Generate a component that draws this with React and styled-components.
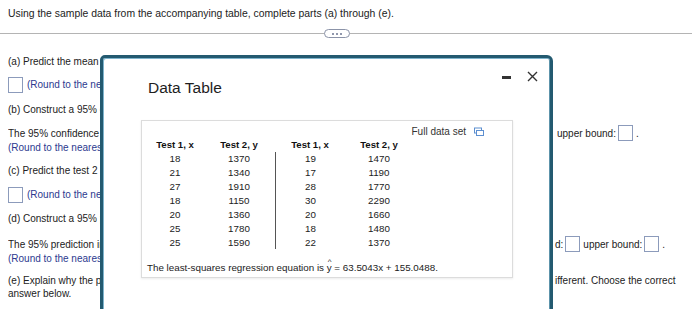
import React from "react"
import styled, { createGlobalStyle } from "styled-components"

const GlobalStyle = createGlobalStyle`
  html, body {
    margin: 0;
    padding: 0;
    background: #fff;
    font-family: "Liberation Sans", Arial, sans-serif;
    color: #222;
  }
`

const Page = styled.div`
  position: relative;
  width: 700px;
  height: 309px;
  overflow: hidden;
  font-size: 10px;
`

const Intro = styled.div`
  padding: 7px 8px 0;
  line-height: 13px;
  font-size: 10.4px;
`

const RuleRow = styled.div`
  position: relative;
  margin: 13px 8px 0 0;
  height: 1px;
  background: #b4b4b4;
`

const MorePill = styled.span`
  position: absolute;
  left: 324px;
  top: -4px;
  width: 24px;
  height: 7px;
  border: 1px solid #8b93a8;
  border-radius: 5px;
  background: #fff;
  display: flex;
  align-items: center;
  justify-content: center;
  gap: 2px;
`

const Dot = styled.i`
  width: 2px;
  height: 2px;
  border-radius: 50%;
  background: #6b7590;
`

const Parts = styled.div`
  padding: 20px 0 0 8px;
`

const Para = styled.div`
  margin-top: ${p => p.$gap ?? 10}px;
`

const Line = styled.div`
  display: flex;
  align-items: center;
  height: ${p => p.$h ?? 14}px;
  white-space: nowrap;
`

const Clip = styled.div`
  width: 547px;
  overflow: hidden;
  display: flex;
  align-items: center;
  flex-shrink: 0;
`

const Hint = styled.span`
  color: #2c3a8f;
`

const AnswerBox = styled.span`
  display: inline-block;
  width: 13px;
  height: 14px;
  border: 1px solid #8c9bbb;
  margin: 0 ${p => p.$mr ?? 4}px 0 ${p => p.$ml ?? 0}px;
  flex-shrink: 0;
`

const Right = styled.div`
  display: flex;
  align-items: center;
  padding-left: ${p => p.$pl ?? 0}px;
`

const Dialog = styled.div`
  position: absolute;
  left: 100px;
  top: 55px;
  width: 447px;
  height: 270px;
  background: #fff;
  border: 3px solid #235a70;
  border-radius: 5px 6px 0 0;
  box-shadow: inset 1px 1px 0 #7fb4cc, inset -1px 0 0 #5d94ab;
`

const DialogHead = styled.div`
  display: flex;
  align-items: center;
  justify-content: space-between;
  padding: 17px 12px 0 45px;
  height: 18px;
`

const Title = styled.h2`
  margin: 8px 0 0;
  font-size: 15.5px;
  font-weight: normal;
  color: #1e1e1e;
`

const Controls = styled.div`
  display: flex;
  align-items: center;
  gap: 16px;
  margin-top: -16px;
`

const Minimize = styled.span`
  width: 9px;
  height: 3px;
  background: #333;
  margin-top: 2px;
`

const CloseIcon = () => (
  <svg width="11" height="11" viewBox="0 0 11 11">
    <path d="M1 1 L10 10 M10 1 L1 10" stroke="#333" strokeWidth="1.4" />
  </svg>
)

const DataBox = styled.div`
  margin: 27px 37px 0 38px;
  height: 156px;
  border: 1px solid #dcdcdc;
  box-shadow: 0 1px 2px rgba(0, 0, 0, 0.08);
  display: flex;
  flex-direction: column;
`

const FullSet = styled.div`
  display: flex;
  justify-content: flex-end;
  align-items: center;
  gap: 8px;
  padding: 5px 28px 0 0;
  font-size: 10px;
  color: #333;
  height: 10px;
`

const SetIcon = () => (
  <svg width="10" height="9" viewBox="0 0 10 9">
    <rect x="0.5" y="1" width="7" height="5" fill="none" stroke="#5d8fd0" strokeWidth="1" />
    <rect x="2.5" y="3.5" width="7" height="5" fill="#fff" stroke="#5d8fd0" strokeWidth="1" />
  </svg>
)

const Grid = styled.div`
  display: grid;
  grid-template-columns: 64px 68px 70px 68px;
  grid-auto-rows: 13.9px;
  margin: 2px 0 0 1px;
  font-size: 9.8px;
`

const Cell = styled.div`
  display: flex;
  align-items: center;
  justify-content: center;
  line-height: 11px;
  font-weight: ${p => (p.$head ? "bold" : "normal")};
  font-size: ${p => (p.$head ? "9.6px" : "inherit")};
  padding-right: ${p => p.$pr ?? 0}px;
  border-left: ${p => (p.$divide ? "1px solid #555" : "none")};
  color: ${p => (p.$head ? "#111" : "#222")};
`

const Equation = styled.div`
  margin: auto 0 0;
  padding: 0 0 4px 5px;
  font-size: 9.8px;
  color: #222;
`

const Hat = styled.span`
  position: relative;
  display: inline-block;
  &::before {
    content: "^";
    position: absolute;
    left: 1px;
    top: -5px;
    font-size: 8px;
  }
`

const rows = [
  [18, 1370, 19, 1470],
  [21, 1340, 17, 1190],
  [27, 1910, 28, 1770],
  [18, 1150, 30, 2290],
  [20, 1360, 20, 1660],
  [25, 1780, 18, 1480],
  [25, 1590, 22, 1370],
]

export default function App() {
  return (
    <Page>
      <GlobalStyle />
      <Intro>Using the sample data from the accompanying table, complete parts (a) through (e).</Intro>
      <RuleRow>
        <MorePill>
          <Dot />
          <Dot />
          <Dot />
        </MorePill>
      </RuleRow>
      <Parts>
        <Para $gap={0}>
          <Line>(a) Predict the mean test 2 score of a student who scored 22 on test 1.</Line>
        </Para>
        <Para $gap={8}>
          <Line $h={17}>
            <AnswerBox />
            <Hint>(Round to the nearest integer as needed.)</Hint>
          </Line>
        </Para>
        <Para $gap={9}>
          <Line>(b) Construct a 95% confidence interval for the mean test 2 score found in part (a).</Line>
        </Para>
        <Para $gap={10}>
          <Line>
            <Clip>The 95% confidence interval for the mean test 2 score is lower bound:</Clip>
            <Right $pl={2}>
              upper bound: <AnswerBox $ml={2} $mr={3} />.
            </Right>
          </Line>
          <Line>
            <Hint>(Round to the nearest integer as needed.)</Hint>
          </Line>
        </Para>
        <Para $gap={9}>
          <Line>(c) Predict the test 2 score of a student who scored 22 on test 1.</Line>
        </Para>
        <Para $gap={9}>
          <Line $h={17}>
            <AnswerBox />
            <Hint>(Round to the nearest integer as needed.)</Hint>
          </Line>
        </Para>
        <Para $gap={8}>
          <Line>(d) Construct a 95% prediction interval for the test 2 score found in part (c).</Line>
        </Para>
        <Para $gap={12}>
          <Line>
            <Clip>The 95% prediction interval for the test 2 score is lower boun</Clip>
            <Right>
              d: <AnswerBox $ml={2} $mr={3} />
              upper bound: <AnswerBox $ml={2} $mr={3} />.
            </Right>
          </Line>
          <Line>
            <Hint>(Round to the nearest integer as needed.)</Hint>
          </Line>
        </Para>
        <Para $gap={8}>
          <Line>
            <Clip>(e) Explain why the predicted values in parts (a) and (c) are the same yet the intervals are d</Clip>
            <Right>ifferent. Choose the correct</Right>
          </Line>
          <Line $h={13}>answer below.</Line>
        </Para>
      </Parts>

      <Dialog>
        <DialogHead>
          <Title>Data Table</Title>
          <Controls>
            <Minimize />
            <CloseIcon />
          </Controls>
        </DialogHead>
        <DataBox>
          <FullSet>
            Full data set <SetIcon />
          </FullSet>
          <Grid>
            <Cell $head>Test 1, x</Cell>
            <Cell $head $pr={4}>Test 2, y</Cell>
            <Cell $head>Test 1, x</Cell>
            <Cell $head>Test 2, y</Cell>
            {rows.map((r, i) => (
              <React.Fragment key={i}>
                <Cell>{r[0]}</Cell>
                <Cell $pr={4}>{r[1]}</Cell>
                <Cell $divide>{r[2]}</Cell>
                <Cell>{r[3]}</Cell>
              </React.Fragment>
            ))}
          </Grid>
          <Equation>
            The least-squares regression equation is <Hat>y</Hat> = 63.5043x + 155.0488.
          </Equation>
        </DataBox>
      </Dialog>
    </Page>
  )
}
